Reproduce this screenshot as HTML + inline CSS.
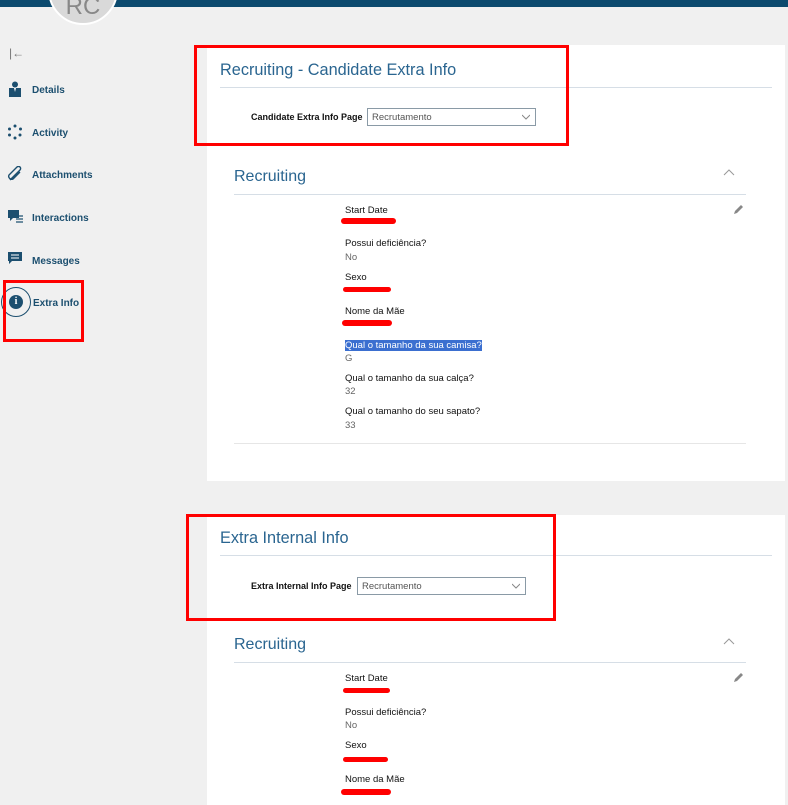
<!DOCTYPE html>
<html><head><meta charset="utf-8"><style>
*{margin:0;padding:0;box-sizing:border-box}
body{width:788px;height:805px;overflow:hidden;background:#f0f0f0;font-family:"Liberation Sans",sans-serif;position:relative}
.a{position:absolute}
.top{left:0;top:0;width:788px;height:7px;background:#0c4a6e}
.av{left:48px;top:-45px;width:70px;height:70px;border-radius:50%;background:#d9d9d9;border:2px solid #fff;text-align:center;font-size:24px;color:#888;line-height:100px}
.nav{left:32px;font-size:10px;font-weight:bold;color:#1c4f6f}
.card{background:#fff;left:207px;width:578px}
.h1{font-size:16.3px;color:#2a6590}
.h2{font-size:16px;color:#2a6590}
.line{height:1px;background:#d6dee6}
.lbl{font-size:9px;font-weight:bold;color:#111}
.sel{height:18px;border:1px solid #8a9aa6;font-size:9.5px;color:#555;padding:3px 4px}
.fl{left:345px;font-size:9.5px;color:#111}
.fv{left:345px;font-size:9.5px;color:#666}
.red{background:#f00;border-radius:4px;height:6px}
.box{border:3px solid #f00}
</style></head><body>
<div class="a top"></div>
<div class="a av">RC</div>
<div class="a" style="left:9px;top:46px;font-size:12px;color:#777">|←</div>
<svg class="a" style="left:8px;top:81px" width="14" height="16"><circle cx="7" cy="3.5" r="3" fill="#1c4f6f"/><path d="M1 7h12v9H1z" fill="#1c4f6f"/><path d="M6 7l1 4 1-4z" fill="#fff"/></svg>
<div class="a nav" style="top:85px">Details</div>
<svg class="a" style="left:7px;top:124px" width="16" height="16" fill="#1c4f6f"><circle cx="8" cy="2" r="1.5"/><circle cx="13.5" cy="5" r="1.5"/><circle cx="13" cy="11" r="1.5"/><circle cx="8" cy="14" r="1.5"/><circle cx="2.5" cy="11" r="1.5"/><circle cx="2.5" cy="5" r="1.5"/></svg>
<div class="a nav" style="top:128px">Activity</div>
<svg class="a" style="left:7px;top:166px" width="16" height="16"><path d="M3 14L13 4a2 2 0 0 0-3-3L2 9a3 3 0 0 0 4 4l7-7" stroke="#1c4f6f" stroke-width="1.4" fill="none"/></svg>
<div class="a nav" style="top:170px">Attachments</div>
<svg class="a" style="left:8px;top:210px" width="16" height="14"><path d="M0 0h11v8H5l-3 3V8H0z" fill="#1c4f6f"/><path d="M8 6h7M8 9h7M8 12h7" stroke="#1c4f6f" stroke-width="1.3"/></svg>
<div class="a nav" style="top:213px">Interactions</div>
<svg class="a" style="left:8px;top:252px" width="15" height="14"><path d="M0 0h14v9H4l-3 3V9H0z" fill="#1c4f6f"/><path d="M3 3h8M3 6h8" stroke="#fff"/></svg>
<div class="a nav" style="top:256px">Messages</div>
<div class="a" style="left:1px;top:287px;width:30px;height:30px;border-radius:50%;border:1px solid #1c4f6f"></div>
<div class="a" style="left:9px;top:295px;width:14px;height:14px;border-radius:50%;background:#1c4f6f;color:#fff;font-size:10px;font-weight:bold;text-align:center;line-height:14px;font-family:'Liberation Serif',serif">i</div>
<div class="a nav" style="top:298px;left:33px">Extra Info</div>
<div class="a box" style="left:3px;top:280px;width:81px;height:62px"></div>

<div class="a card" style="top:45px;height:436px"></div>
<div class="a h1" style="left:220px;top:61px">Recruiting - Candidate Extra Info</div>
<div class="a line" style="left:220px;top:87px;width:552px"></div>
<div class="a lbl" style="left:251px;top:112px">Candidate Extra Info Page</div>
<div class="a sel" style="left:367px;top:108px;width:169px">Recrutamento</div>
<svg class="a" style="left:522px;top:114px" width="8" height="6"><path d="M0 1l4 4 4-4" stroke="#888" fill="none"/></svg>
<div class="a h2" style="left:234px;top:168px">Recruiting</div>
<svg class="a" style="left:723px;top:169px" width="12" height="7"><path d="M1 6l5-5 5 5" stroke="#999" fill="none"/></svg>
<div class="a line" style="left:234px;top:194px;width:512px"></div>
<svg class="a" style="left:733px;top:203px" width="12" height="12"><path d="M1 11l1-3 6-6 2 2-6 6z" fill="#888"/></svg>
<div class="a fl" style="top:205px">Start Date</div><div class="a red" style="left:341px;top:218px;width:55px"></div>
<div class="a fl" style="top:238px">Possui deficiência?</div><div class="a fv" style="top:252px">No</div>
<div class="a fl" style="top:272px">Sexo</div><div class="a red" style="left:343px;top:287px;width:48px;height:5px"></div>
<div class="a fl" style="top:306px">Nome da Mãe</div><div class="a red" style="left:342px;top:320px;width:50px"></div>
<div class="a fl" style="top:340px;background:#3b6fd0;color:#fff">Qual o tamanho da sua camisa?</div><div class="a fv" style="top:353px">G</div>
<div class="a fl" style="top:373px">Qual o tamanho da sua calça?</div><div class="a fv" style="top:386px">32</div>
<div class="a fl" style="top:406px">Qual o tamanho do seu sapato?</div><div class="a fv" style="top:420px">33</div>
<div class="a line" style="left:234px;top:443px;width:512px;background:#e6e6e6"></div>
<div class="a box" style="left:194px;top:45px;width:375px;height:101px"></div>

<div class="a card" style="top:515px;height:290px"></div>
<div class="a h1" style="left:220px;top:529px">Extra Internal Info</div>
<div class="a line" style="left:220px;top:555px;width:552px"></div>
<div class="a lbl" style="left:251px;top:581px">Extra Internal Info Page</div>
<div class="a sel" style="left:357px;top:577px;width:169px">Recrutamento</div>
<svg class="a" style="left:512px;top:583px" width="8" height="6"><path d="M0 1l4 4 4-4" stroke="#888" fill="none"/></svg>
<div class="a h2" style="left:234px;top:636px">Recruiting</div>
<svg class="a" style="left:723px;top:638px" width="12" height="7"><path d="M1 6l5-5 5 5" stroke="#999" fill="none"/></svg>
<div class="a line" style="left:234px;top:662px;width:512px"></div>
<svg class="a" style="left:733px;top:671px" width="12" height="12"><path d="M1 11l1-3 6-6 2 2-6 6z" fill="#888"/></svg>
<div class="a fl" style="top:673px">Start Date</div><div class="a red" style="left:343px;top:688px;width:47px;height:5px"></div>
<div class="a fl" style="top:707px">Possui deficiência?</div><div class="a fv" style="top:720px">No</div>
<div class="a fl" style="top:740px">Sexo</div><div class="a red" style="left:343px;top:757px;width:45px;height:5px"></div>
<div class="a fl" style="top:774px">Nome da Mãe</div><div class="a red" style="left:341px;top:789px;width:50px"></div>
<div class="a box" style="left:186px;top:514px;width:370px;height:107px"></div>
</body></html>
